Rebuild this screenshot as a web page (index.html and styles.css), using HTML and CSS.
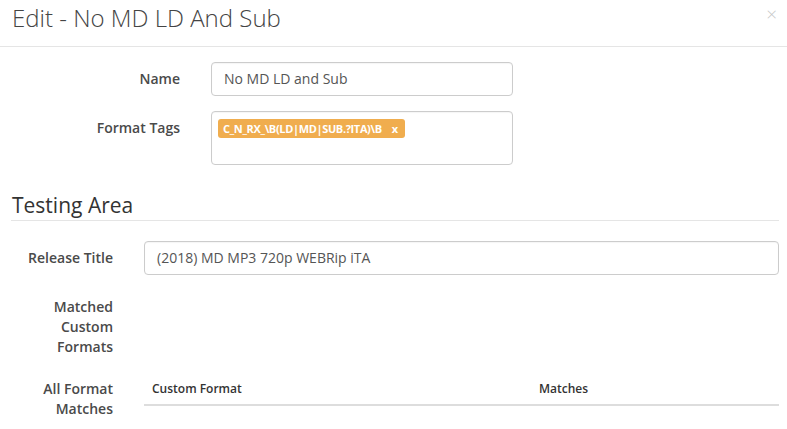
FILE: index.html
```html
<!DOCTYPE html>
<html>
<head>
<meta charset="utf-8">
<link rel="stylesheet" href="styles.css">
</head>
<body>
<div class="modal">
  <div class="modal-header">
    <h3 class="modal-title">Edit - No MD LD And Sub</h3>
    <span class="close">&times;</span>
  </div>
  <div class="modal-body">
    <div class="form-row top">
      <label class="label wide">Name</label>
      <div class="input name-input">No MD LD and Sub</div>
    </div>
    <div class="form-row top">
      <label class="label wide">Format Tags</label>
      <div class="input tags-input">
        <span class="tag">C_N_RX_\B(LD|MD|SUB.?ITA)\B<span class="tag-x">x</span></span>
      </div>
    </div>
    <div class="legend">Testing Area</div>
    <div class="form-row">
      <label class="label narrow">Release Title</label>
      <div class="input full-input">(2018) MD MP3 720p WEBRip iTA</div>
    </div>
    <div class="form-row">
      <label class="label narrow">Matched<br>Custom<br>Formats</label>
      <div class="empty"></div>
    </div>
    <div class="form-row">
      <label class="label narrow">All Format<br>Matches</label>
      <div class="table">
        <div class="th th-format">Custom Format</div>
        <div class="th th-matches">Matches</div>
      </div>
    </div>
  </div>
</div>
</body>
</html>
```
FILE: styles.css
```css
html, body {
  margin: 0;
  padding: 0;
  background: #fff;
}
body {
  font-family: "Open Sans", "DejaVu Sans", sans-serif;
  font-size: 14px;
  line-height: 20px;
  color: #555;
}
.modal-header {
  height: 47px;
  box-sizing: border-box;
  padding: 3px 12px 0 12px;
  border-bottom: 1px solid #e5e5e5;
  display: flex;
  justify-content: space-between;
}
.modal-title {
  margin: 0;
  font-size: 24px;
  font-weight: 300;
  line-height: 30px;
  color: #444;
}
.close {
  font-size: 19px;
  line-height: 22px;
  color: #c8c8c8;
  margin-right: -2px;
  font-weight: 300;
}
.modal-body {
  padding: 15px 8px 0 11px;
}
.form-row {
  display: flex;
  margin-bottom: 15px;
}
.label {
  box-sizing: border-box;
  text-align: right;
  padding-top: 7px;
  font-weight: 600;
  color: #4a4a4a;
  flex: none;
}
.label.wide {
  width: 169px;
  margin-right: 31px;
}
.label.narrow {
  width: 102px;
  margin-right: 31px;
}
.input {
  box-sizing: border-box;
  border: 1px solid #ccc;
  border-radius: 4px;
  padding: 6px 12px;
  color: #555;
  box-shadow: inset 0 1px 1px rgba(0,0,0,0.04);
}
.name-input {
  width: 302px;
  height: 34px;
}
.tags-input {
  width: 302px;
  height: 54px;
  padding: 6px 6px;
  line-height: 19px;
}
.full-input {
  flex: 1;
  height: 34px;
}
.tag {
  display: inline-block;
  background: #f0ad4e;
  color: #fff;
  font-size: 11px;
  font-weight: 700;
  line-height: 19px;
  height: 19px;
  padding: 0 7px 0 5px;
  border-radius: 3px;
  letter-spacing: -0.35px;
}
.tag-x {
  margin-left: 10px;
}
.legend {
  margin: 25px 0 20px 0;
  padding-left: 1px;
  font-size: 21px;
  line-height: 30px;
  color: #333;
  border-bottom: 1px solid #e5e5e5;
}
.empty {
  flex: 1;
}
.table {
  flex: 1;
  display: flex;
  align-self: flex-start;
  border-bottom: 2px solid #ddd;
}
.th {
  font-size: 12px;
  font-weight: 600;
  color: #333;
  padding: 7px 8px 5px 8px;
  line-height: 20px;
}
.th-format {
  width: 371px;
}
```
